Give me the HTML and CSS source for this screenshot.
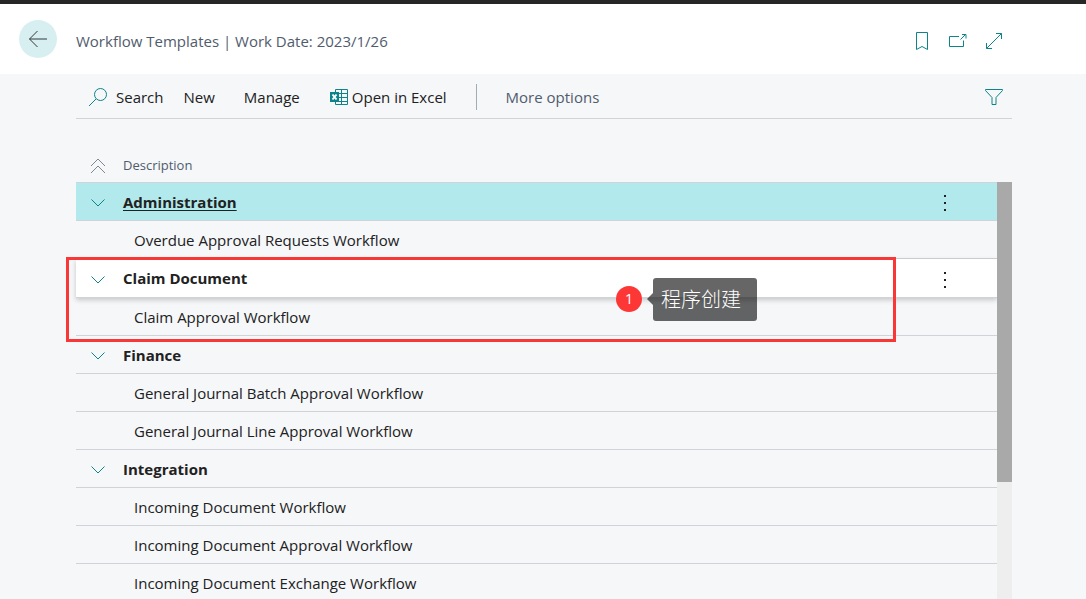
FILE: index.html
```html
<!DOCTYPE html>
<html lang="en">
<head>
    <meta charset="UTF-8">
    <meta name="viewport" content="width=device-width, initial-scale=1.0">
    <title>Workflow Templates</title>
    <link rel="stylesheet" href="styles.css">
</head>
<body>
    <header class="header">
        <button class="back" aria-label="Back">
            <svg width="20" height="18" viewBox="0 0 20 18"><path d="M9.5 1 1.5 9l8 8M1.5 9H19"/></svg>
        </button>
        <h1 class="title">Workflow Templates | Work Date: 2023/1/26</h1>
        <div class="header-icons">
            <button aria-label="Bookmark">
                <svg width="20" height="20" viewBox="0 0 20 20"><path d="M4.5 1.5h11v17L10 15.5l-5.5 3z"/></svg>
            </button>
            <button aria-label="Open in new window">
                <svg width="20" height="20" viewBox="0 0 20 20"><path d="M11 5.5H1.5v10h14v-6M12.5 8.5l5-5M14 3.5h4v4"/></svg>
            </button>
            <button aria-label="Full screen">
                <svg width="20" height="20" viewBox="0 0 20 20"><path d="M2.5 17.5l15-15M12 2.5h5.5V8M2.5 12v5.5H8"/></svg>
            </button>
        </div>
    </header>

    <main class="content">
        <nav class="toolbar">
            <button class="search">
                <svg width="20" height="20" viewBox="0 0 20 20"><circle cx="12.5" cy="7.5" r="6"/><path d="M8 12l-7 7"/></svg>
                Search
            </button>
            <button class="new">New</button>
            <button class="manage">Manage</button>
            <button class="excel">
                <svg width="20" height="18" viewBox="0 0 20 18">
                    <path d="M6.5 1.5h12v15h-12zM6.500 5.5h12M6.5 9.5h12M6.5 13.5h12M12.5 1.5v15"/>
                    <path class="excel-box" d="M1 4h9v10H1z"/>
                    <path class="excel-x" d="M3.5 6.5l4 5M7.5 6.5l-4 5"/>
                </svg>
                Open in Excel
            </button>
            <span class="divider"></span>
            <button class="more">More options</button>
            <button class="filter" aria-label="Filter">
                <svg width="20" height="20" viewBox="0 0 20 20"><path d="M1.5 2.5h17v1l-6.5 7v7H8v-7l-6.5-7z"/></svg>
            </button>
        </nav>

        <div class="list">
            <table class="templates">
                <thead>
                    <tr>
                        <th class="col-expand">
                            <button aria-label="Collapse all"><svg class="gray" width="16" height="16" viewBox="0 0 16 16"><path d="M1 8l7-7 7 7M1 15l7-7 7 7"/></svg></button>
                        </th>
                        <th>Description</th>
                        <th class="col-menu"></th>
                    </tr>
                </thead>
                <tbody>
                    <tr class="group selected">
                        <td><button aria-label="Collapse"><svg width="16" height="10" viewBox="0 0 16 10"><path d="M1.5 1.5L8 8l6.5-6.5"/></svg></button></td>
                        <td><a href="#">Administration</a></td>
                        <td class="menu"><button aria-label="More"><svg class="dots" width="4" height="16" viewBox="0 0 4 16"><path d="M1 0h2v2H1zM1 7h2v2H1zM1 14h2v2H1z"/></svg></button></td>
                    </tr>
                    <tr>
                        <td></td>
                        <td class="item">Overdue Approval Requests Workflow</td>
                        <td></td>
                    </tr>
                    <tr class="group hovered">
                        <td><button aria-label="Collapse"><svg width="16" height="10" viewBox="0 0 16 10"><path d="M1.5 1.5L8 8l6.5-6.5"/></svg></button></td>
                        <td>Claim Document</td>
                        <td class="menu"><button aria-label="More"><svg class="dots" width="4" height="16" viewBox="0 0 4 16"><path d="M1 0h2v2H1zM1 7h2v2H1zM1 14h2v2H1z"/></svg></button></td>
                    </tr>
                    <tr>
                        <td></td>
                        <td class="item">Claim Approval Workflow</td>
                        <td></td>
                    </tr>
                    <tr class="group">
                        <td><button aria-label="Collapse"><svg width="16" height="10" viewBox="0 0 16 10"><path d="M1.5 1.5L8 8l6.5-6.5"/></svg></button></td>
                        <td>Finance</td>
                        <td></td>
                    </tr>
                    <tr>
                        <td></td>
                        <td class="item">General Journal Batch Approval Workflow</td>
                        <td></td>
                    </tr>
                    <tr>
                        <td></td>
                        <td class="item">General Journal Line Approval Workflow</td>
                        <td></td>
                    </tr>
                    <tr class="group">
                        <td><button aria-label="Collapse"><svg width="16" height="10" viewBox="0 0 16 10"><path d="M1.5 1.5L8 8l6.5-6.5"/></svg></button></td>
                        <td>Integration</td>
                        <td></td>
                    </tr>
                    <tr>
                        <td></td>
                        <td class="item">Incoming Document Workflow</td>
                        <td></td>
                    </tr>
                    <tr>
                        <td></td>
                        <td class="item">Incoming Document Approval Workflow</td>
                        <td></td>
                    </tr>
                    <tr>
                        <td></td>
                        <td class="item">Incoming Document Exchange Workflow</td>
                        <td></td>
                    </tr>
                </tbody>
            </table>
            <div class="scrollbar"><div class="thumb"></div></div>

            <div class="highlight">
                <span class="badge">1</span>
                <span class="tooltip">程序创建</span>
            </div>
        </div>
    </main>
</body>
</html>
```

FILE: styles.css
```css
* {
    padding: 0;
    margin: 0;
    box-sizing: border-box;
}

body {
    display: flex;
    flex-direction: column;
    height: 100vh;
    overflow: hidden;
    background-color: #f5f7f9;
    color: #212121;
    font-family: "Open Sans", "Noto Sans CJK SC", sans-serif;
    font-size: 15px;
    line-height: 20px;
}

button {
    display: inline-flex;
    align-items: center;
    border: 0;
    background: none;
    color: inherit;
    font: inherit;
    vertical-align: middle;
    cursor: pointer;
}

svg {
    display: block;
    fill: none;
    stroke: #0c8489;
}

.header {
    display: flex;
    align-items: center;
    flex-shrink: 0;
    height: 74px;
    padding: 0 82px 0 19px;
    border-top: 4px solid #262626;
    background-color: white;
}

.back {
    justify-content: center;
    width: 38px;
    height: 38px;
    border-radius: 50%;
    background-color: #d8eff1;
}

.back svg {
    stroke: #33383d;
}

.title {
    flex: 1;
    padding: 4px 0 0 19px;
    color: #505c6d;
    font-size: 15px;
    font-weight: 400;
}

.header-icons {
    display: flex;
    gap: 16px;
    padding-top: 4px;
}

.content {
    display: flex;
    flex: 1;
    flex-direction: column;
    min-height: 0;
    padding: 0 74px 0 76px;
}

.toolbar {
    display: flex;
    align-items: center;
    flex-shrink: 0;
    height: 45px;
    padding: 1px 8px 0 12px;
    border-bottom: 1px solid #d0d4d8;
}

.search {
    gap: 8px;
}

.new {
    margin-left: 20px;
}

.manage {
    margin-left: 29px;
}

.excel {
    gap: 3px;
    margin-left: 29px;
}

.excel-box {
    fill: #0c8489;
    stroke: none;
}

.excel-x {
    stroke: white;
    stroke-width: 2;
}

.divider {
    width: 1px;
    height: 26px;
    margin: 0 29px;
    background-color: #a5abb3;
}

.more {
    color: #505c6d;
}

.filter {
    margin-left: auto;
}

.list {
    position: relative;
    display: flex;
    flex: 1;
    align-items: flex-start;
    min-height: 0;
}

.templates {
    flex: 1;
    border-collapse: separate;
    border-spacing: 0;
    table-layout: fixed;
}

th {
    height: 64px;
    padding-top: 28px;
    border-bottom: 1px solid #d0d4d8;
    color: #505c6d;
    font-size: 13px;
    font-weight: 400;
    text-align: left;
}

td {
    height: 38px;
    border-bottom: 1px solid #d0d4d8;
}

.col-expand {
    width: 47px;
}

.col-menu {
    width: 103px;
}

th:first-child, td:first-child {
    padding-left: 14px;
}

.gray {
    stroke: #7f8792;
}

.item {
    padding-left: 11px;
}

.group {
    font-weight: 700;
}

.group a {
    color: inherit;
    text-underline-offset: 2px;
}

.selected {
    background-color: #b2e9ec;
}

.hovered {
    background-color: white;
    box-shadow: 0 2px 5px rgba(0, 0, 0, 0.2);
}

.hovered td {
    height: 39px;
}

.menu {
    padding-left: 49px;
}

.dots {
    fill: #212121;
    stroke: none;
}

.scrollbar {
    align-self: stretch;
    width: 15px;
    margin-top: 63px;
    background-color: #eeeeee;
}

.thumb {
    height: 72%;
    background-color: #a9a9a9;
}

/* callout over the Claim Document group */
.highlight {
    position: absolute;
    top: 138px;
    left: -10px;
    right: 116px;
    height: 85px;
    border: 3px solid #fa3737;
}

.badge {
    position: absolute;
    top: 26px;
    right: 251px;
    width: 26px;
    height: 26px;
    border-radius: 50%;
    background-color: #fd3636;
    color: white;
    line-height: 25px;
    text-align: center;
}

.tooltip {
    position: absolute;
    top: 18px;
    right: 136px;
    width: 104px;
    height: 43px;
    padding-left: 8px;
    border-radius: 3px;
    background-color: rgba(0, 0, 0, 0.6);
    color: white;
    font-size: 20px;
    font-weight: 300;
    line-height: 43px;
}

.tooltip::before {
    content: "";
    position: absolute;
    top: 15px;
    right: 100%;
    border: 6px solid transparent;
    border-left: 0;
    border-right-color: rgba(0, 0, 0, 0.6);
}
```
